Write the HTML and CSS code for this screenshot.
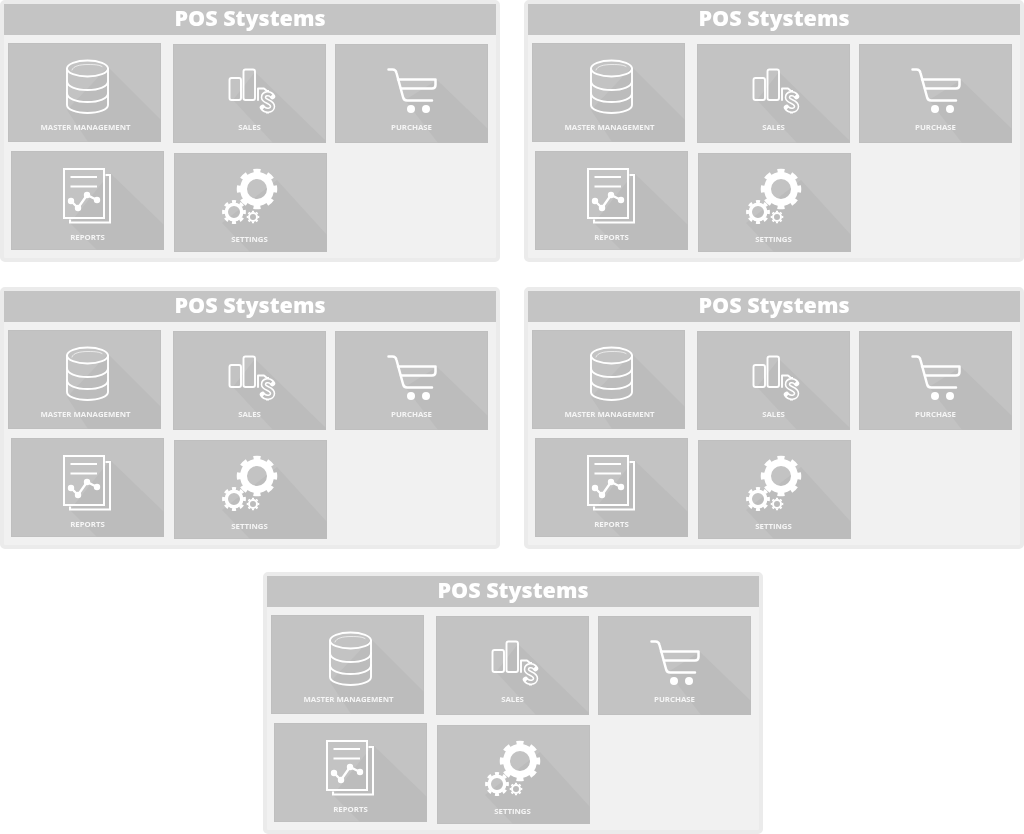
FILE: index.html
```html
<!DOCTYPE html>
<html lang="en">
<head>
<meta charset="utf-8">
<title>POS Systems</title>
<link rel="stylesheet" href="styles.css">
</head>
<body>
<svg class="defs" aria-hidden="true">
  <symbol id="i-db" viewBox="40 14 73 60" overflow="visible">
    <g class="line">
      <ellipse cx="79.5" cy="25.500" rx="20.5" ry="8"/>
      <path d="M59 25.500V62C59 66.5 68 70 79.5 70S100 66.5 100 62V25.500"/>
      <path d="M59 38C59 43.5 68 47 79.5 47S100 43.5 100 38"/>
      <path d="M59 50C59 55.500 68 59 79.500 59S100 55.500 100 50"/>
      <path class="thin" d="M64 27C65 23 72 21.500 80 21.500S91 22 94 23.500"/>
    </g>
  </symbol>
  <symbol id="i-sales" viewBox="40 14 73 60" overflow="visible">
    <g class="line">
      <rect x="56.500" y="34" width="11.500" height="22" rx="2"/>
      <rect x="70.500" y="25.500" width="11.500" height="30.500" rx="2"/>
      <path d="M85 56V44.500H91L94 47"/>
      <path class="nub" d="M94.500 46V50M94.500 65V69.500"/>
      <path class="dollar-out" d="M99.500 52.500C97 48.500 90.500 49 90.500 53.500C90.500 58 99.500 57 99.500 62.500C99.500 67 92 67.500 89.500 63.500"/>
      <path class="dollar-in" pathLength="100" d="M99.500 52.500C97 48.500 90.500 49 90.500 53.500C90.500 58 99.500 57 99.500 62.500C99.500 67 92 67.500 89.500 63.500"/>
    </g>
  </symbol>
  <symbol id="i-cart" viewBox="40 14 73 60" overflow="visible">
    <g class="line heavy">
      <path d="M53.500 25.500H57.500C60 25.500 61 26.500 61.500 29L68 53C68.500 55.500 70 56.500 72 56.500H97"/>
      <path d="M63 35.500H100.500V41C100.500 43.500 99 44.500 97 44.500H66"/>
    </g>
    <circle class="solid" cx="76" cy="65" r="4"/>
    <circle class="solid" cx="91" cy="65" r="4"/>
  </symbol>
  <symbol id="i-reports" viewBox="40 14 73 60" overflow="visible">
    <g class="line page">
      <rect x="53" y="18" width="40" height="49"/>
      <path d="M94.500 24H99V71.500H59V68.500"/>
      <path d="M59.500 26H86M59.500 35.500H86"/>
    </g>
    <path class="chart" d="M60 50L67 57L76 44L86 49"/>
    <circle class="solid" cx="60" cy="50" r="3.200"/>
    <circle class="solid" cx="67" cy="57" r="3.200"/>
    <circle class="solid" cx="76" cy="44" r="3.200"/>
    <circle class="solid" cx="86" cy="49" r="3.200"/>
  </symbol>
  <symbol id="i-gears" viewBox="40 14 73 60" overflow="visible">
    <g class="gear">
      <circle cx="83" cy="36" r="13.500" stroke-width="7"/>
      <circle class="teeth" cx="83" cy="36" r="18" stroke-width="4.500" pathLength="16"/>
      <circle cx="60" cy="59" r="7.750" stroke-width="3.500"/>
      <circle class="teeth" cx="60" cy="59" r="10.500" stroke-width="2.800" pathLength="16"/>
      <circle cx="79" cy="64" r="4" stroke-width="2"/>
      <circle class="teeth" cx="79" cy="64" r="5.500" stroke-width="1.600" pathLength="16"/>
    </g>
  </symbol>
</svg>

<main class="board">
  <section class="panel">
    <h1 class="panel-title">POS Stystems</h1>
    <div class="row row-a">
      <a class="tile tile-master"><svg class="icon"><use href="#i-db"/></svg><span class="label">MASTER MANAGEMENT</span></a>
      <a class="tile tile-sales"><svg class="icon"><use href="#i-sales"/></svg><span class="label">SALES</span></a>
      <a class="tile tile-purchase"><svg class="icon"><use href="#i-cart"/></svg><span class="label">PURCHASE</span></a>
    </div>
    <div class="row row-b">
      <a class="tile tile-reports"><svg class="icon"><use href="#i-reports"/></svg><span class="label">REPORTS</span></a>
      <a class="tile tile-settings"><svg class="icon"><use href="#i-gears"/></svg><span class="label">SETTINGS</span></a>
    </div>
  </section>
  <section class="panel">
    <h1 class="panel-title">POS Stystems</h1>
    <div class="row row-a">
      <a class="tile tile-master"><svg class="icon"><use href="#i-db"/></svg><span class="label">MASTER MANAGEMENT</span></a>
      <a class="tile tile-sales"><svg class="icon"><use href="#i-sales"/></svg><span class="label">SALES</span></a>
      <a class="tile tile-purchase"><svg class="icon"><use href="#i-cart"/></svg><span class="label">PURCHASE</span></a>
    </div>
    <div class="row row-b">
      <a class="tile tile-reports"><svg class="icon"><use href="#i-reports"/></svg><span class="label">REPORTS</span></a>
      <a class="tile tile-settings"><svg class="icon"><use href="#i-gears"/></svg><span class="label">SETTINGS</span></a>
    </div>
  </section>
  <section class="panel">
    <h1 class="panel-title">POS Stystems</h1>
    <div class="row row-a">
      <a class="tile tile-master"><svg class="icon"><use href="#i-db"/></svg><span class="label">MASTER MANAGEMENT</span></a>
      <a class="tile tile-sales"><svg class="icon"><use href="#i-sales"/></svg><span class="label">SALES</span></a>
      <a class="tile tile-purchase"><svg class="icon"><use href="#i-cart"/></svg><span class="label">PURCHASE</span></a>
    </div>
    <div class="row row-b">
      <a class="tile tile-reports"><svg class="icon"><use href="#i-reports"/></svg><span class="label">REPORTS</span></a>
      <a class="tile tile-settings"><svg class="icon"><use href="#i-gears"/></svg><span class="label">SETTINGS</span></a>
    </div>
  </section>
  <section class="panel">
    <h1 class="panel-title">POS Stystems</h1>
    <div class="row row-a">
      <a class="tile tile-master"><svg class="icon"><use href="#i-db"/></svg><span class="label">MASTER MANAGEMENT</span></a>
      <a class="tile tile-sales"><svg class="icon"><use href="#i-sales"/></svg><span class="label">SALES</span></a>
      <a class="tile tile-purchase"><svg class="icon"><use href="#i-cart"/></svg><span class="label">PURCHASE</span></a>
    </div>
    <div class="row row-b">
      <a class="tile tile-reports"><svg class="icon"><use href="#i-reports"/></svg><span class="label">REPORTS</span></a>
      <a class="tile tile-settings"><svg class="icon"><use href="#i-gears"/></svg><span class="label">SETTINGS</span></a>
    </div>
  </section>
  <section class="panel panel-last">
    <h1 class="panel-title">POS Stystems</h1>
    <div class="row row-a">
      <a class="tile tile-master"><svg class="icon"><use href="#i-db"/></svg><span class="label">MASTER MANAGEMENT</span></a>
      <a class="tile tile-sales"><svg class="icon"><use href="#i-sales"/></svg><span class="label">SALES</span></a>
      <a class="tile tile-purchase"><svg class="icon"><use href="#i-cart"/></svg><span class="label">PURCHASE</span></a>
    </div>
    <div class="row row-b">
      <a class="tile tile-reports"><svg class="icon"><use href="#i-reports"/></svg><span class="label">REPORTS</span></a>
      <a class="tile tile-settings"><svg class="icon"><use href="#i-gears"/></svg><span class="label">SETTINGS</span></a>
    </div>
  </section>
</main>
</body>
</html>
```

FILE: styles.css
```css
* { box-sizing: border-box; }

html, body {
  margin: 0;
  height: 834px;
  overflow: hidden;
  background: #fff;
}

.defs {
  position: absolute;
  width: 0;
  height: 0;
}

.board {
  display: flex;
  flex-wrap: wrap;
  justify-content: center;
  column-gap: 24px;
  row-gap: 25px;
  align-content: flex-start;
  width: 1024px;
  font-family: "Open Sans", "Noto Sans", sans-serif;
}

.panel {
  width: 500px;
  height: 262px;
  border: 4px solid #ebebeb;
  border-radius: 5px;
  background: #f1f1f1;
  filter: blur(0.6px);
}

.panel-last {
  margin-top: -2px;
  margin-left: 2px;
}

.panel-title {
  margin: 0 0 8px;
  height: 31px;
  background: #c4c4c4;
  color: #fff;
  font-size: 21.500px;
  font-weight: 800;
  line-height: 27px;
  text-align: center;
}

.row {
  display: flex;
  align-items: flex-start;
}

.row-a {
  margin-left: 4px;
}

.row-b {
  margin-left: 7px;
  margin-top: 8px;
  gap: 10px;
}

.tile {
  position: relative;
  display: flex;
  flex-direction: column;
  align-items: center;
  width: 153px;
  height: 99px;
  padding-top: 14px;
  background: #c3c3c3;
  box-shadow: inset 0 0 0 1px #bfbfbf;
}

.tile::before {
  content: "";
  position: absolute;
  inset: 0;
  background: #bcbcbc;
}

.tile-master { margin-right: 12px; }
.tile-sales { margin-top: 1px; margin-right: 9px; }
.tile-purchase { margin-top: 1px; }
.tile-settings { margin-top: 2px; }

.tile-master::before { clip-path: polygon(100px 24px, 153px 77px, 153px 99px, 80px 99px, 59px 67px); }
.tile-sales::before { clip-path: polygon(82px 28px, 153px 97px, 153px 99px, 100px 99px, 60px 56px); }
.tile-purchase::before { clip-path: polygon(102px 36px, 153px 85px, 153px 99px, 103px 99px, 70px 56px); }
.tile-reports::before { clip-path: polygon(99px 22px, 153px 74px, 153px 99px, 86px 99px, 59px 72px); }
.tile-settings::before { clip-path: polygon(103px 27px, 153px 82px, 153px 99px, 76px 99px, 48px 70px); }

.icon {
  position: relative;
  display: block;
  flex: none;
  width: 73px;
  height: 60px;
}

.label {
  position: relative;
  margin-top: 4px;
  color: #f5f5f5;
  font-size: 7.800px;
  font-weight: 700;
  line-height: 12px;
  white-space: nowrap;
}

.tile-master .label { padding-left: 2px; }
.tile-sales .label,
.tile-purchase .label { margin-top: 3px; }
.tile-reports .label,
.tile-settings .label { margin-top: 6px; }
.tile-settings .label { padding-right: 2px; }

.line {
  fill: none;
  stroke: #fff;
  stroke-width: 1.900;
  stroke-linecap: round;
  stroke-linejoin: round;
}

.heavy { stroke-width: 2.500; }
.page { stroke-width: 2; stroke-linecap: butt; stroke-linejoin: miter; }
.thin { stroke-width: 0.8; opacity: 0.8; }
.solid { fill: #fff; }

.chart {
  fill: none;
  stroke: #fff;
  stroke-width: 2.400;
}

.dollar-out { stroke-width: 5.500; stroke-linecap: round; }
.dollar-in {
  stroke: #bcbcbc;
  stroke-width: 2.400;
  stroke-linecap: butt;
  stroke-dasharray: 0 4 92 100;
}
.nub { stroke-width: 3; stroke-linecap: butt; }

.gear circle {
  fill: none;
  stroke: #fff;
}

.gear .teeth {
  stroke-dasharray: 1 1;
  stroke-dashoffset: 0.5;
  stroke-linecap: butt;
}
```
